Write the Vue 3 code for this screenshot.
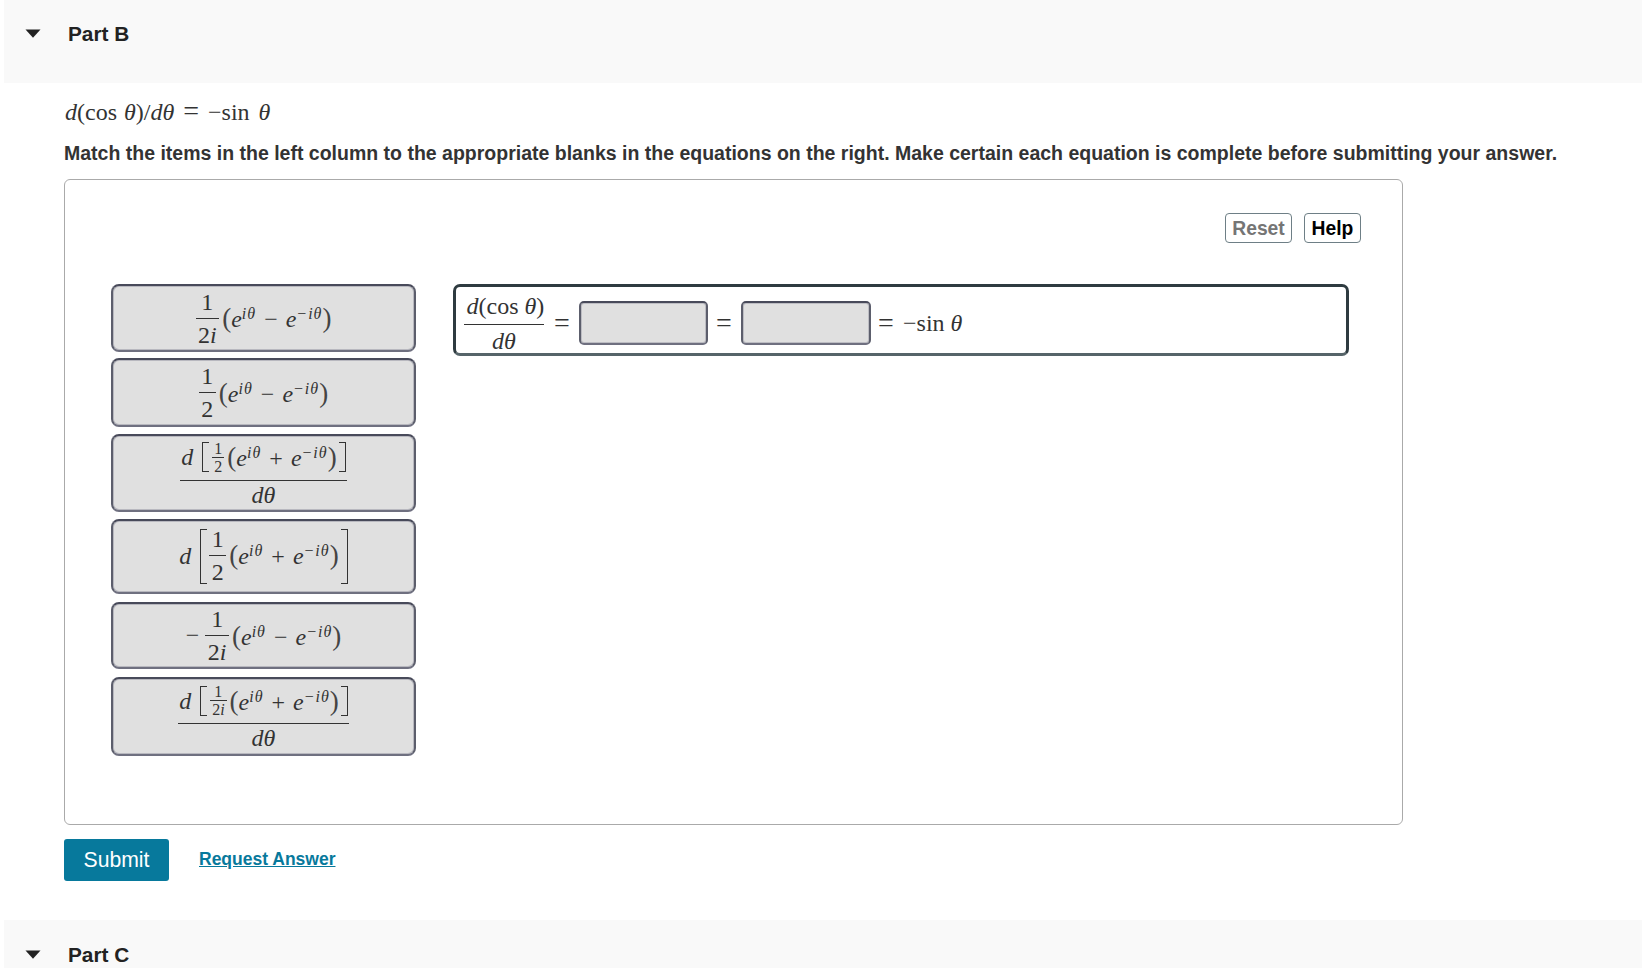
<script setup>
const stub = null
</script>

<template>
  <div class="page">
    <header class="part">
      <svg class="caret" width="16" height="9" viewBox="0 0 16 9"><path d="M0.5 0.5H15.5L8 8.7Z" fill="#222" /></svg>
      <h2 class="part-title">Part B</h2>
    </header>

    <main class="body">
      <p class="given m">
        <i>d</i>(cos<span class="thin"></span><i>θ</i>)/<i>dθ</i><span class="rel">=</span>−sin<span class="thin wide-gap"></span><i>θ</i>
      </p>
      <p class="instr">Match the items in the left column to the appropriate blanks in the equations on the right. Make certain each equation is complete before submitting your answer.</p>

      <section class="card">
        <div class="tools">
          <button class="tool reset">Reset</button>
          <button class="tool help">Help</button>
        </div>
        <div class="work">
          <div class="bank">
            <div class="item h1 m">
              <span class="frac"><span class="n">1</span><span class="d">2<i>i</i></span></span>
              <span class="run"><span class="p">(</span><i>e</i><sup>iθ</sup><span class="bin">−</span><i>e</i><sup>−iθ</sup><span class="p">)</span></span>
            </div>
            <div class="item h2 m">
              <span class="frac"><span class="n">1</span><span class="d">2</span></span>
              <span class="run"><span class="p">(</span><i>e</i><sup>iθ</sup><span class="bin">−</span><i>e</i><sup>−iθ</sup><span class="p">)</span></span>
            </div>
            <div class="item h3 m">
              <span class="frac wide">
                <span class="n flexn">
                  <i class="dd">d</i><span class="br l sm"></span>
                  <span class="frac tiny"><span class="n">1</span><span class="d">2</span></span>
                  <span class="run"><span class="p">(</span><i>e</i><sup>iθ</sup><span class="bin">+</span><i>e</i><sup>−iθ</sup><span class="p">)</span></span>
                  <span class="br r sm"></span>
                </span>
                <span class="d"><i>dθ</i></span>
              </span>
            </div>
            <div class="item h4 m">
              <i class="dd big">d</i><span class="br l lg"></span>
              <span class="frac lifted"><span class="n">1</span><span class="d">2</span></span>
              <span class="run lifted"><span class="p">(</span><i>e</i><sup>iθ</sup><span class="bin">+</span><i>e</i><sup>−iθ</sup><span class="p">)</span></span>
              <span class="br r lg"></span>
            </div>
            <div class="item h5 m">
              <span class="neg">−</span>
              <span class="frac"><span class="n">1</span><span class="d">2<i>i</i></span></span>
              <span class="run"><span class="p">(</span><i>e</i><sup>iθ</sup><span class="bin">−</span><i>e</i><sup>−iθ</sup><span class="p">)</span></span>
            </div>
            <div class="item h6 m">
              <span class="frac wide">
                <span class="n flexn">
                  <i class="dd">d</i><span class="br l sm"></span>
                  <span class="frac tiny"><span class="n">1</span><span class="d">2<i>i</i></span></span>
                  <span class="run"><span class="p">(</span><i>e</i><sup>iθ</sup><span class="bin">+</span><i>e</i><sup>−iθ</sup><span class="p">)</span></span>
                  <span class="br r sm"></span>
                </span>
                <span class="d"><i>dθ</i></span>
              </span>
            </div>
          </div>

          <div class="answer m">
            <span class="frac lhs"><span class="n"><i>d</i>(cos<span class="thin"></span><i>θ</i>)</span><span class="d"><i>dθ</i></span></span>
            <span class="eq">=</span>
            <span class="slot first"></span>
            <span class="eq mid">=</span>
            <span class="slot second"></span>
            <span class="eq last">=</span>
            <span class="tail">−sin<span class="thin"></span><i>θ</i></span>
          </div>
        </div>
      </section>

      <div class="actions">
        <button class="submit">Submit</button>
        <a class="link" href="#">Request Answer</a>
      </div>
    </main>

    <header class="part partc">
      <svg class="caret" width="16" height="9" viewBox="0 0 16 9"><path d="M0.5 0.5H15.5L8 8.7Z" fill="#222" /></svg>
      <h2 class="part-title">Part C</h2>
    </header>
  </div>
</template>

<style scoped>
.page {
  width: 1642px;
  height: 968px;
  overflow: hidden;
  background: #fff;
  color: #333;
  font-family: "Liberation Sans", Arial, sans-serif;
}
.part {
  margin-left: 4px;
  height: 83px;
  background: #f9f9f9;
  display: flex;
  align-items: flex-start;
  padding: 22px 0 0 21px;
  box-sizing: border-box;
}
.partc {
  height: 48px;
  padding-top: 23px;
}
.caret {
  margin-top: 7px;
  margin-right: 27px;
  flex: none;
}
.part-title {
  margin: 0;
  font-size: 20.8px;
  line-height: 23px;
  font-weight: 700;
  color: #222;
}
.body {
  padding: 16px 0 0 64px;
  height: 837px;
  box-sizing: border-box;
}
.m {
  font-family: "Liberation Serif", "Times New Roman", serif;
  font-size: 24px;
  color: #333;
}
.given {
  margin: 0 0 0 1px;
  height: 24px;
  line-height: 24px;
  white-space: nowrap;
}
.thin {
  display: inline-block;
  width: 6px;
}
.given .thin {
  width: 7px;
}
.given .wide-gap {
  width: 9px;
}
.rel {
  font-size: 28px;
  line-height: 24px;
  margin: 0 9px 0 9px;
}
.instr {
  margin: 18px 0 0 0;
  font-size: 19.5px;
  line-height: 24px;
  font-weight: 700;
  white-space: nowrap;
}
.card {
  margin-top: 14px;
  width: 1339px;
  height: 646px;
  box-sizing: border-box;
  border: 1px solid #aaa;
  border-radius: 6px;
  padding: 33px 41px 0 46px;
}
.tools {
  display: flex;
  justify-content: flex-end;
  gap: 12px;
  height: 30px;
}
.tool {
  height: 30px;
  padding: 1px 0 0;
  background: #fff;
  border: 1px solid #6e7f86;
  border-radius: 4px;
  font: 700 19.3px/28px "Liberation Sans", Arial, sans-serif;
  color: #000;
  width: 57px;
}
.reset {
  width: 67px;
  color: #757575;
}
.work {
  margin-top: 41px;
  display: flex;
  align-items: flex-start;
  gap: 37px;
}
.bank {
  width: 305px;
  flex: none;
  display: flex;
  flex-direction: column;
}
.item {
  box-sizing: border-box;
  background: #e0e0e0;
  border: 2px solid #5c5e6c;
  border-top-color: #484a5a;
  border-bottom-color: #6f7080;
  box-shadow: inset 0 0 0 1px rgba(110, 110, 130, 0.35);
  border-radius: 8px;
  display: flex;
  align-items: center;
  justify-content: center;
  white-space: nowrap;
}
.h1 { height: 68px; margin-bottom: 6px; }
.h2 { height: 69px; margin-bottom: 7px; }
.h3 { height: 78px; margin-bottom: 7px; }
.h4 { height: 75px; margin-bottom: 8px; }
.h5 { height: 67px; margin-bottom: 8px; }
.h6 { height: 79px; }

.frac {
  display: inline-flex;
  flex-direction: column;
  align-items: stretch;
  text-align: center;
  line-height: 22px;
  flex: none;
}
.frac > .n {
  padding: 0 2.5px 5px;
}
.frac > .d {
  border-top: 1px solid #333;
  padding: 5px 2.5px 0;
}
.wide > .n {
  padding: 0 1px 6px;
}
.wide > .d {
  padding-top: 3px;
}
.lifted {
  margin-bottom: 3px;
}
.flexn {
  display: flex;
  align-items: center;
  justify-content: center;
}
.tiny {
  font-size: 16px;
  line-height: 15px;
}
.tiny > .n {
  padding: 0 2px 1px;
}
.tiny > .d {
  padding: 1px 2px 0;
}
.run {
  margin-left: 3px;
  line-height: 28px;
  height: 28px;
  display: inline-block;
}
.run sup {
  font-size: 16px;
  font-style: italic;
  line-height: 0;
  vertical-align: 8px;
  letter-spacing: 1px;
}
.p {
  font-size: 27px;
  font-weight: 400;
  color: #444;
}
.bin {
  margin: 0 8px;
}
.neg {
  margin-right: 6px;
}
.dd {
  margin-right: 9px;
}
.dd.big {
  margin-right: 9px;
}
.br {
  box-sizing: border-box;
  width: 7px;
  border: 1px solid #333;
  flex: none;
}
.br.l { border-right: none; }
.br.r { border-left: none; margin-left: 2px; }
.sm { height: 30px; }
.lg { height: 55px; border-width: 1.5px; }
.lg.l { margin-right: 2px; }
.sm.l { margin-right: 3px; }

.answer {
  box-sizing: border-box;
  width: 896px;
  height: 72px;
  flex: none;
  border: 3px solid #2e3b40;
  border-bottom-color: #566469;
  border-radius: 7px;
  display: flex;
  align-items: center;
  padding: 6px 0 0 8px;
  white-space: nowrap;
}
.lhs {
  width: 80px;
}
.frac.lhs > .n {
  padding-bottom: 7px;
}
.eq {
  font-size: 28px;
  width: 16px;
  text-align: center;
  margin: 0 9px 0 10px;
  flex: none;
}
.eq.mid {
  margin: 0 9px 0 8px;
}
.eq.last {
  margin: 0 9px 0 7px;
}
.slot {
  box-sizing: border-box;
  height: 44px;
  background: #e0e0e0;
  border: 2px solid #5c5e6c;
  border-top-color: #484a5a;
  border-bottom-color: #6f7080;
  box-shadow: inset 0 0 0 1px rgba(110, 110, 130, 0.3);
  border-radius: 5px;
  flex: none;
}
.first { width: 129px; }
.second { width: 130px; }

.actions {
  margin-top: 14px;
  display: flex;
  align-items: center;
  gap: 30px;
}
.submit {
  width: 105px;
  height: 42px;
  border: 0;
  border-radius: 3px;
  background: #07799c;
  color: #fff;
  font: 400 21.2px/42px "Liberation Sans", Arial, sans-serif;
  padding: 0;
}
.link {
  color: #07799c;
  font-size: 17.5px;
  line-height: 22px;
  font-weight: 700;
  margin-top: -3px;
}
</style>
